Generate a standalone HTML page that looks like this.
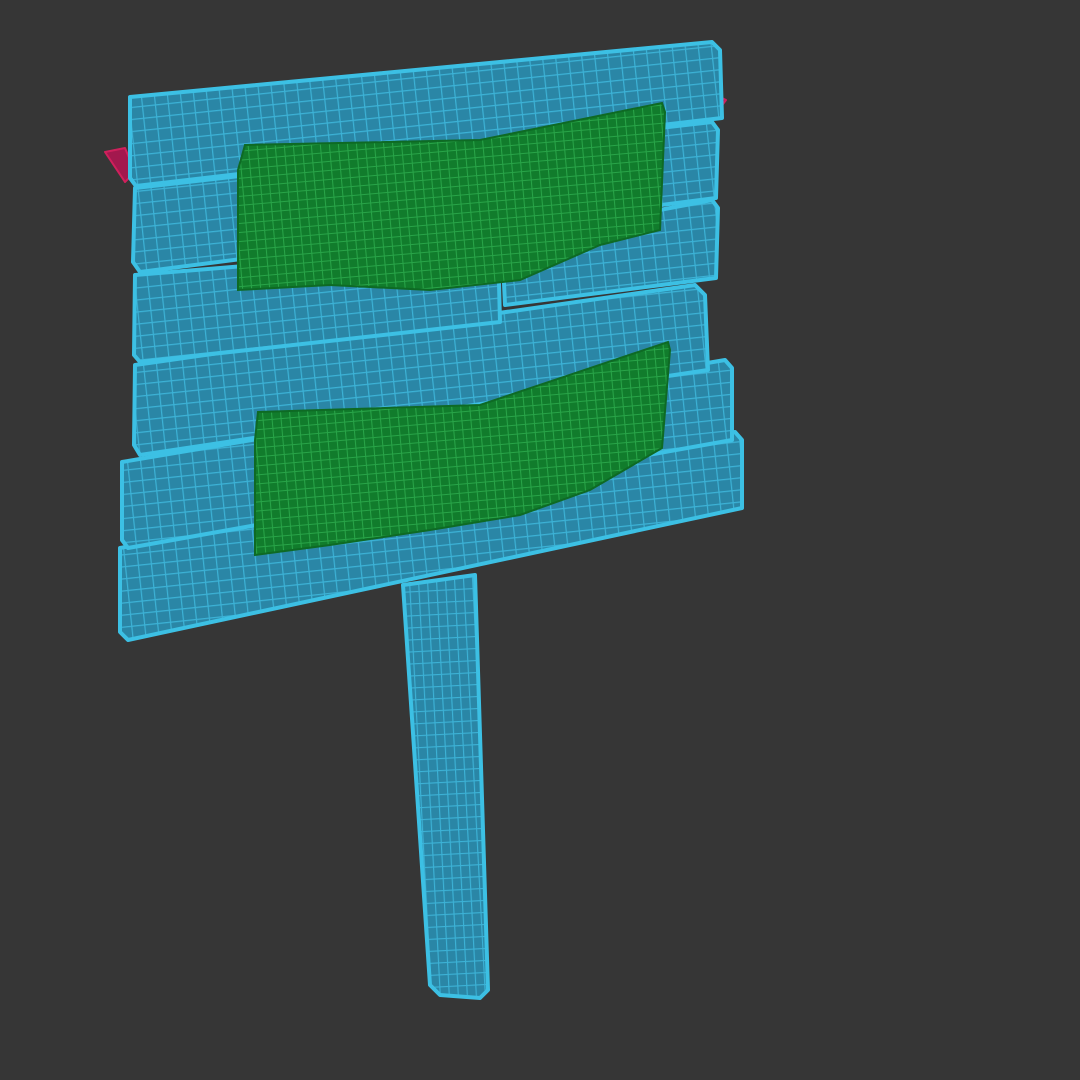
<!DOCTYPE html><html><head><style>html,body{margin:0;padding:0;background:#363636;width:1080px;height:1080px;overflow:hidden}</style></head><body>
<svg width="1080" height="1080" viewBox="0 0 1080 1080" xmlns="http://www.w3.org/2000/svg">
<defs>
<pattern id="pc" width="13" height="12" patternUnits="userSpaceOnUse" patternTransform="rotate(-6)">
<rect width="13" height="12" fill="#2a86a6"/>
<path d="M0 0.5H13M0.5 0V12" stroke="#3cb2d6" stroke-width="1.4"/>
</pattern>
<pattern id="pp" width="9" height="12" patternUnits="userSpaceOnUse" patternTransform="rotate(-3)">
<rect width="9" height="12" fill="#2a86a6"/>
<path d="M0 0.5H9M0.5 0V12" stroke="#3cb2d6" stroke-width="1.3"/>
</pattern>
<pattern id="pg" width="9" height="9" patternUnits="userSpaceOnUse" patternTransform="rotate(-5)">
<rect width="9" height="9" fill="#117c2c"/>
<path d="M0 0.5H9M0.5 0V9" stroke="#28a448" stroke-width="1.1"/>
</pattern>
</defs>
<g stroke="#3cc0e4" stroke-width="4" stroke-linejoin="round">
<polygon points="105,152 125,148 135,172 125,182" fill="#a3184e" stroke="#d0205c" stroke-width="2"/>
<polygon points="718,96 726,100 720,108" fill="#a3184e" stroke="#d0205c" stroke-width="2"/>
<polygon points="403,585 475,575 488,990 480,998 440,995 430,985" fill="url(#pp)"/>
<polygon points="120,548 735,432 742,440 742,508 128,640 120,632" fill="url(#pc)"/>
<polygon points="122,462 725,360 732,368 732,440 128,548 122,540" fill="url(#pc)"/>
<polygon points="135,365 695,285 705,295 708,370 140,455 134,445" fill="url(#pc)"/>
<polygon points="135,275 498,245 500,322 140,362 134,355" fill="url(#pc)"/>
<polygon points="502,240 712,200 718,208 716,278 505,305" fill="url(#pc)"/>
<polygon points="135,188 712,122 718,130 716,198 140,272 133,262" fill="url(#pc)"/>
<polygon points="130,97 712,42 720,50 722,118 136,186 130,178" fill="url(#pc)"/>
</g>
<g stroke="#0e6a24" stroke-width="2">
<polygon points="245,145 480,140 662,103 665,112 660,230 600,245 520,280 430,290 330,285 238,290 238,170" fill="url(#pg)"/>
<polygon points="258,412 480,405 668,342 670,350 662,448 590,490 520,515 430,530 330,545 255,555 255,440" fill="url(#pg)"/>
</g>
</svg>
</body></html>
